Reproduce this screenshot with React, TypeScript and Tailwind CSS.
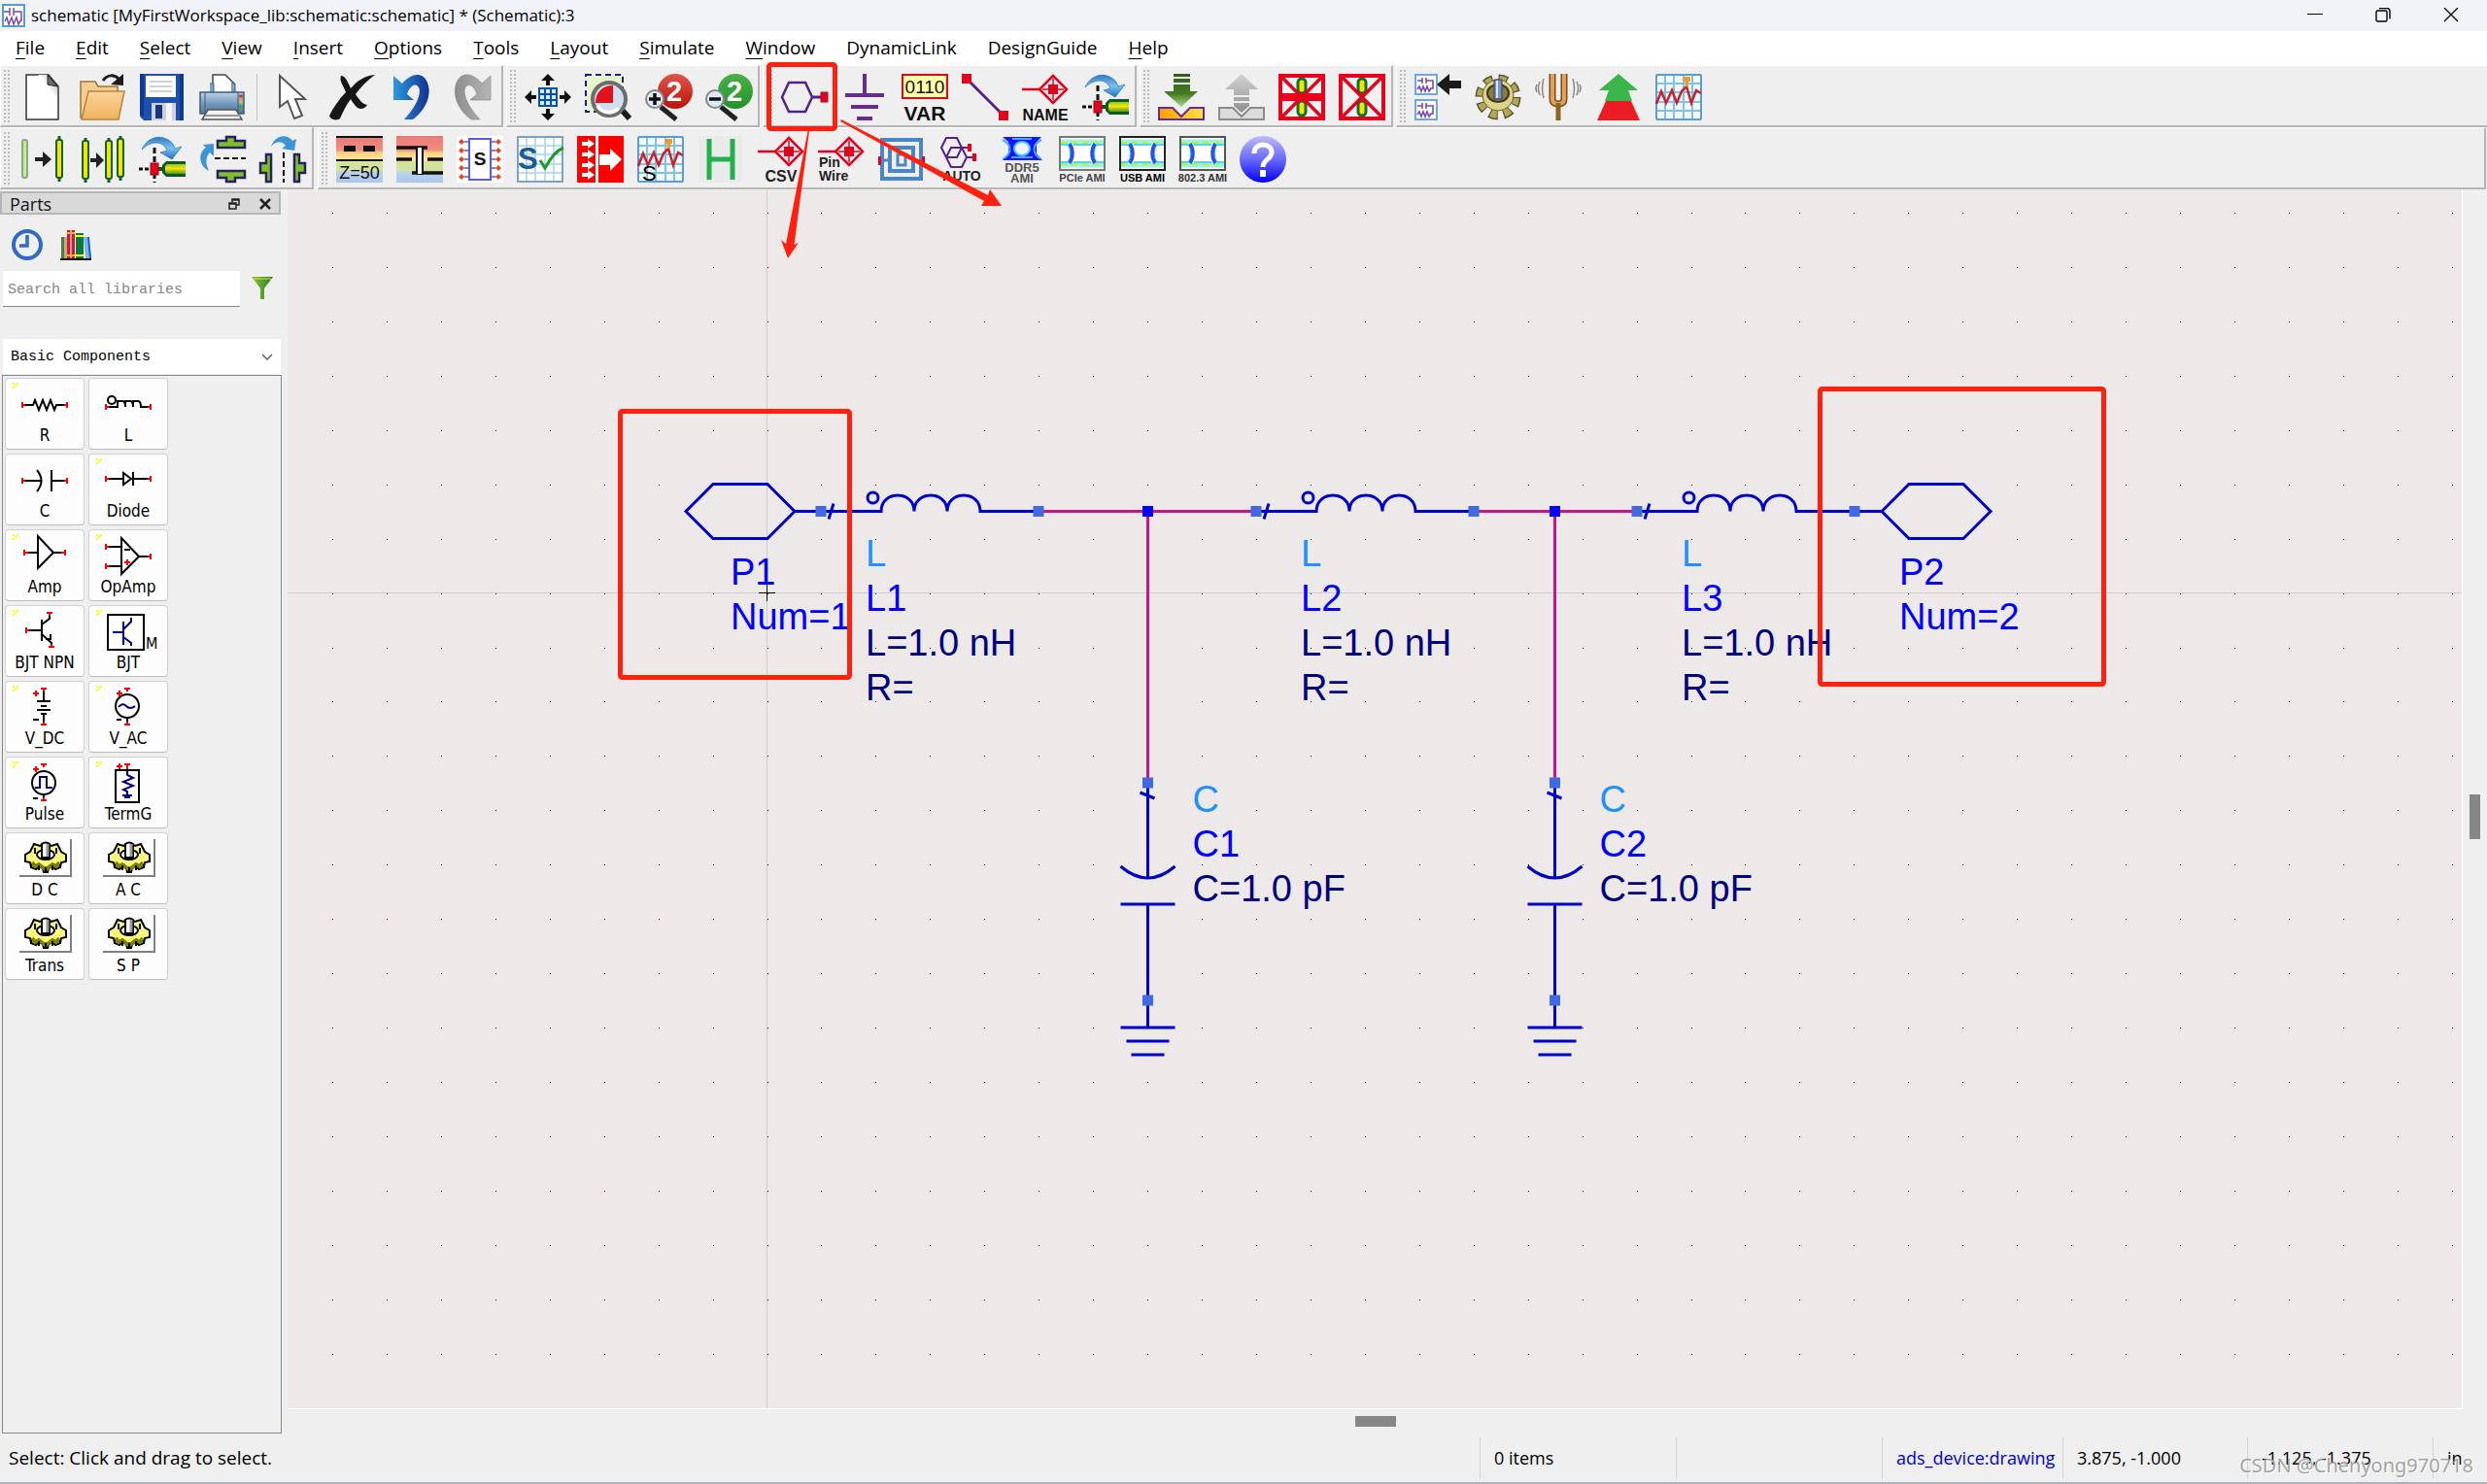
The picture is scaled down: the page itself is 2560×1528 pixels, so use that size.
import { useState, type ReactNode } from "react";
import clsx from "clsx";

const UI = "font-['Open_Sans','Segoe_UI',sans-serif]";

const MENUS = [
  ["F", "ile"],
  ["E", "dit"],
  ["S", "elect"],
  ["V", "iew"],
  ["I", "nsert"],
  ["O", "ptions"],
  ["T", "ools"],
  ["L", "ayout"],
  ["S", "imulate"],
  ["W", "indow"],
  ["", "DynamicLink"],
  ["", "DesignGuide"],
  ["H", "elp"],
];

type Tool = { name: string; icon: ReactNode } | "sep";

/* Shared gradients, referenced by id from every icon. */
function Gradients() {
  return (
    <svg width="0" height="0" className="absolute" aria-hidden="true">
      <defs>
        <linearGradient id="folder" x1="0" y1="0" x2="0" y2="1">
          <stop offset="0" stopColor="#fbd49a" />
          <stop offset="1" stopColor="#efb35e" />
        </linearGradient>
        <linearGradient id="page" x1="1" y1="0" x2="0.4" y2="0.5">
          <stop offset="0" stopColor="#b5b5b5" />
          <stop offset="1" stopColor="#ffffff" />
        </linearGradient>
        <linearGradient id="undo" x1="0" y1="0" x2="1" y2="0">
          <stop offset="0" stopColor="#2a9be0" />
          <stop offset="1" stopColor="#14308e" />
        </linearGradient>
        <linearGradient id="redo" x1="0" y1="0" x2="1" y2="0">
          <stop offset="0" stopColor="#8e8e8e" />
          <stop offset="1" stopColor="#b4b4b4" />
        </linearGradient>
        <linearGradient id="printer" x1="0" y1="0" x2="0" y2="1">
          <stop offset="0" stopColor="#bcd2e6" />
          <stop offset="0.6" stopColor="#6e93b8" />
          <stop offset="1" stopColor="#56799c" />
        </linearGradient>
        <linearGradient id="swoop" x1="0" y1="0" x2="0" y2="1">
          <stop offset="0" stopColor="#2f7fc4" />
          <stop offset="0.5" stopColor="#7cc0ee" />
          <stop offset="1" stopColor="#1f6fbd" />
        </linearGradient>
        <linearGradient id="pin" x1="0" y1="0" x2="0" y2="1">
          <stop offset="0" stopColor="#8fc92c" />
          <stop offset="0.45" stopColor="#f7e600" />
          <stop offset="1" stopColor="#4f9a25" />
        </linearGradient>
        <linearGradient id="redball" x1="0" y1="0" x2="0" y2="1">
          <stop offset="0" stopColor="#e0564a" />
          <stop offset="1" stopColor="#b8140c" />
        </linearGradient>
        <linearGradient id="greenball" x1="0" y1="0" x2="0" y2="1">
          <stop offset="0" stopColor="#4bb04a" />
          <stop offset="1" stopColor="#23922a" />
        </linearGradient>
        <linearGradient id="down" x1="0" y1="0" x2="0" y2="1">
          <stop offset="0" stopColor="#2f5c17" />
          <stop offset="0.6" stopColor="#447a26" />
          <stop offset="1" stopColor="#a9d880" />
        </linearGradient>
        <linearGradient id="tray" x1="0" y1="0" x2="1" y2="0">
          <stop offset="0" stopColor="#ff9d00" />
          <stop offset="1" stopColor="#ffe14a" />
        </linearGradient>
        <linearGradient id="grey" x1="0" y1="0" x2="0" y2="1">
          <stop offset="0" stopColor="#d4d4d4" />
          <stop offset="1" stopColor="#8f8f8f" />
        </linearGradient>
        <linearGradient id="stack" x1="0" y1="0" x2="0" y2="1">
          <stop offset="0" stopColor="#e87a76" />
          <stop offset="0.3" stopColor="#f08e80" />
          <stop offset="0.36" stopColor="#fdd27c" />
          <stop offset="0.5" stopColor="#fbe3a4" />
          <stop offset="0.58" stopColor="#d3e39a" />
          <stop offset="0.74" stopColor="#cfe3a2" />
          <stop offset="0.78" stopColor="#b9d2ee" />
          <stop offset="1" stopColor="#aac6ea" />
        </linearGradient>
        <linearGradient id="help" x1="0" y1="0" x2="0" y2="1">
          <stop offset="0" stopColor="#bcbcfb" />
          <stop offset="0.5" stopColor="#6a6af8" />
          <stop offset="1" stopColor="#0000ff" />
        </linearGradient>
        <linearGradient id="funnel" x1="0" y1="0" x2="1" y2="0">
          <stop offset="0" stopColor="#8bc63a" />
          <stop offset="1" stopColor="#2d7a1c" />
        </linearGradient>
        <pattern id="dither" width="4" height="4" patternUnits="userSpaceOnUse">
          <rect width="4" height="4" fill="#fff" />
          <rect width="2" height="2" fill="#ff0" />
          <rect x="2" y="2" width="2" height="2" fill="#ff0" />
        </pattern>
      </defs>
    </svg>
  );
}

function Ico({ children }: { children: ReactNode }) {
  return (
    <svg viewBox="0 0 48 48" className="size-12 overflow-visible" fill="none" aria-hidden="true">
      {children}
    </svg>
  );
}

function Swoop() {
  return (
    <path
      d="M3 14C8 2 20-1 28 3c5 2 8 6 9 10l7-2-10 13L22 17l7-2c-2-5-6-8-11-8-6 0-11 3-15 7Z"
      fill="url(#swoop)"
      stroke="#2a70b2"
      strokeWidth="0.7"
    />
  );
}

function RotatePin() {
  return (
    <Ico>
      <Swoop />
      <path d="M16 12v15M16 38v10" stroke="#111" strokeWidth="3" strokeDasharray="6 3" />
      <path d="M0 34h10" stroke="#111" strokeWidth="3" strokeDasharray="4 2" />
      <rect x="20" y="32" width="6" height="4" fill="#0f5a24" />
      <path d="M48 26H28l-4 4v8l4 4h20Z" fill="#0f5a24" />
      <path d="M48 29H29l-2 2v6l2 2h19Z" fill="url(#pin)" />
      <rect x="12" y="28" width="8" height="12" fill="#e8001c" stroke="#8c0f14" />
    </Ico>
  );
}

function NetDiamond() {
  return (
    <>
      <path d="M0 16h18" stroke="#e8001c" strokeWidth="2.5" />
      <path d="M32 2 46 16 32 30 18 16Z" fill="#efefef" stroke="#e8001c" strokeWidth="2.5" />
      <path d="M27 11h10v10H27Z" fill="#e8001c" />
      <path d="M32 5v22M21 16h22" stroke="#e8001c" strokeWidth="1.5" />
    </>
  );
}

function Magnifier({ sign }: { sign: "+" | "-" }) {
  return (
    <>
      <path d="m16 34 16 13" stroke="#222" strokeWidth="5" />
      <circle cx="10" cy="26" r="9" fill="#dcebf7" stroke="#888" strokeWidth="2" />
      <path d={sign === "+" ? "M4 26h12M10 20v12" : "M4 26h12"} stroke="#111" strokeWidth="3.5" />
    </>
  );
}

function Caption({ y = 47, size = 14, fill = "#111", children }: { y?: number; size?: number; fill?: string; children: string }) {
  return (
    <text x="24" y={y} textAnchor="middle" fontFamily="Liberation Sans, sans-serif" fontWeight="bold" fontSize={size} fill={fill}>
      {children}
    </text>
  );
}

function Eye({ label, edge, fill }: { label: string; edge: string; fill: string }) {
  return (
    <Ico>
      <rect x="1" y="1" width="46" height="34" fill="#fff" stroke={edge} strokeWidth="2" />
      <path d="M2 6h44M2 30h44" stroke="#9df2d8" strokeWidth="5" />
      <path d="M2 7h44M2 29h44" stroke="#b6f23c" strokeWidth="2" strokeDasharray="6 5" />
      <path d="M2 9h6c5 0 5 18 0 18H2M46 9h-6c-5 0-5 18 0 18h6M15 9h18M15 27h18" stroke="#22c8f0" strokeWidth="1.5" />
      <path d="M11 8c4 6 4 14 0 20M37 8c-4 6-4 14 0 20" stroke="#2a4cf0" strokeWidth="3.5" />
      <Caption y={47} size={11} fill={fill}>{label}</Caption>
    </Ico>
  );
}

function DeletePins({ wide }: { wide?: boolean }) {
  return (
    <Ico>
      <rect x="2" y="2" width="44" height="44" fill="#f1f1f1" stroke="#e8001c" strokeWidth="4" />
      <rect x="20" y="5" width="8" height="15" rx="4" fill="#f4e500" stroke="#12702c" strokeWidth="3" />
      <rect x="20" y="28" width="8" height="15" rx="4" fill="#f4e500" stroke="#12702c" strokeWidth="3" />
      <path d="M4 4l40 40M44 4 4 44" stroke="#e8001c" strokeWidth="3.5" />
      {wide && <path d="M3 24h42" stroke="#e8001c" strokeWidth="8" />}
    </Ico>
  );
}

function Plot({ s }: { s?: boolean }) {
  return (
    <Ico>
      <rect x="1" y="1" width="46" height="46" rx="1" fill="#f4f8fb" stroke="#5b9bd0" strokeWidth="2" />
      <path d="M10 2v44M19 2v44M29 2v44M38 2v44M2 10h44M2 19h44M2 29h44M2 38h44" stroke="#7cc3e6" strokeWidth="2" />
      <path d="M1 31l5-13 5 12 6-13 5 13 5-12 5-5 5 17 5-13 5 3" stroke="#c8202c" strokeWidth="2.5" />
      <path d="M29 3h7v5h-2v5h-3V8h-2Z" fill="#f39a1e" />
      {s && (
        <text x="5" y="46" fontFamily="Liberation Sans, sans-serif" fontSize="22" fill="#000">
          S
        </text>
      )}
    </Ico>
  );
}

function MiniSchematic({ x = 0, y = 0 }: { x?: number; y?: number }) {
  return (
    <g transform={`translate(${x} ${y})`}>
      <rect x="1" y="1" width="22" height="20" fill="#fff" stroke="#6fa8dc" strokeWidth="2" />
      <path d="M3 7h5M8 4v6M12 4v6M12 7h7v8h-3M3 16l2-3 2 5 2-5 2 5 2-5 2 5 2-3" stroke="#7a4aa8" strokeWidth="1.6" />
    </g>
  );
}

const MAIN_TOOLS: Tool[][] = [
  [
    {
      name: "New",
      icon: (
        <Ico>
          <path d="M8 1h23l10 12v34H8Z" fill="#fff" stroke="#333" strokeWidth="1.5" />
          <path d="M20 1h10l10 12v12Z" fill="url(#page)" />
          <path d="M30 1v10l10 2Z" fill="#6d6d6d" stroke="#222" />
        </Ico>
      ),
    },
    {
      name: "Open",
      icon: (
        <Ico>
          <path d="M2 46V8h15l3 5h20v9" fill="#f3cd92" stroke="#a27434" strokeWidth="1.5" />
          <path d="M10 18h37l-6 29H3Z" fill="url(#folder)" stroke="#b9833b" strokeWidth="1.5" />
          <path d="M25 7c5-7 12-6 16-2" stroke="#1b1b1b" strokeWidth="3" />
          <path d="M46 0v12l-13-1Z" fill="#1b1b1b" />
        </Ico>
      ),
    },
    {
      name: "Save",
      icon: (
        <Ico>
          <path d="M1 0h44l1 1v47H5l-4-4Z" fill="#1d4fb0" />
          <path d="M1 0h4v44l-4-2ZM42 0h4v48h-4Z" fill="#0d3a91" />
          <path d="M7 2h31v22H7Z" fill="#fafafa" />
          <path d="M11 8h23M11 13h23M11 18h23" stroke="#cfd3d9" strokeWidth="2" />
          <path d="M13 30h25v18H13Z" fill="#cdd2d9" />
          <path d="M17 32h7v14h-7Z" fill="#17357a" />
          <path d="M28 30h6v18h-6Z" fill="#f4f4f4" />
        </Ico>
      ),
    },
    {
      name: "Print",
      icon: (
        <Ico>
          <path d="M14 20V1h13l9 9v10Z" fill="#fff" stroke="#444" strokeWidth="1.5" />
          <path d="M11 10h4v12h-4M33 10h4v12h-4" fill="#7ba0c4" stroke="#41637f" />
          <path d="M1 19h45v22H1Z" fill="url(#printer)" stroke="#3b5c79" strokeWidth="1.5" />
          <path d="M6 19v22M40 19v22" stroke="#3b5c79" />
          <path d="M41 23h4" stroke="#e23636" strokeWidth="3" />
          <path d="M41 29h4" stroke="#f0b429" strokeWidth="3" />
          <path d="M41 34h4" stroke="#47a447" strokeWidth="3" />
          <path d="M9 37h29l6 10H3Z" fill="#f2f2f2" stroke="#555" strokeWidth="1.5" />
          <path d="M6 43h36" stroke="#999" strokeWidth="2" />
        </Ico>
      ),
    },
    "sep",
    {
      name: "Select",
      icon: (
        <Ico>
          <path d="M12 2v32l8-6 7 18 8-3-7-17h10Z" fill="#fff" stroke="#555" strokeWidth="2" />
        </Ico>
      ),
    },
    {
      name: "Delete",
      icon: (
        <Ico>
          <path
            d="M13 2c4 0 6 4 10 13C30 7 37 2 48 1 39 8 33 14 28 21c4 6 7 10 12 11-3 5-9 5-12 1-2-2-4-5-5-7-5 7-8 13-11 20-4 3-10 1-11-3C5 35 11 26 18 19 15 11 11 7 13 2Z"
            fill="#171717"
          />
        </Ico>
      ),
    },
    {
      name: "Undo",
      icon: (
        <Ico>
          <path d="M5 2v25l21 0-7-6c2-6 6-11 10-9 6 3 3 18-13 35h9C41 35 45 18 39 7 35-1 24-2 14 10Z" fill="url(#undo)" />
        </Ico>
      ),
    },
    {
      name: "Redo",
      icon: (
        <Ico>
          <path
            d="M43 2v25H22l7-6c-2-6-6-11-10-9-6 3-3 18 13 35h-9C7 35 3 18 9 7c4-8 15-9 25 3Z"
            fill="url(#redo)"
            stroke="#8a8a8a"
            strokeWidth="0.7"
          />
        </Ico>
      ),
    },
  ],
  [
    {
      name: "View All",
      icon: (
        <Ico>
          <rect x="14" y="14" width="20" height="20" fill="#0a4fa8" />
          <path
            d="M16 16h4v4h-4ZM22 16h4v4h-4ZM28 16h4v4h-4ZM16 22h4v4h-4ZM22 22h4v4h-4ZM28 22h4v4h-4ZM16 28h4v4h-4ZM22 28h4v4h-4ZM28 28h4v4h-4Z"
            fill="#d5ecfb"
          />
          <path d="M24 0l7 7h-5v5h-4V7h-5ZM24 48l7-7h-5v-5h-4v5h-5ZM0 24l7-7v5h5v4H7v5ZM48 24l-7-7v5h-5v4h5v5Z" fill="#111" />
        </Ico>
      ),
    },
    {
      name: "Zoom To Area",
      icon: (
        <Ico>
          <path d="M1 1h38v38H1Z" fill="#e8f4cc" stroke="#13208a" strokeWidth="2" strokeDasharray="6 4" />
          <path d="m37 36 9 10" stroke="#1b1b1b" strokeWidth="6" />
          <circle cx="25" cy="26" r="17" fill="#cfdff0" stroke="#6d6d6d" strokeWidth="4" />
          <path d="M29 12v18H11c0-11 7-18 18-18Z" fill="#e3111a" />
          <path d="M13 33c5 8 16 9 22 2" stroke="#fff" strokeWidth="4" />
        </Ico>
      ),
    },
    {
      name: "Zoom In By 2",
      icon: (
        <Ico>
          <circle cx="31" cy="18" r="18" fill="url(#redball)" />
          <Magnifier sign="+" />
          <text x="22" y="28" fontFamily="Liberation Sans, sans-serif" fontWeight="bold" fontSize="29" fill="#fff">
            2
          </text>
        </Ico>
      ),
    },
    {
      name: "Zoom Out By 2",
      icon: (
        <Ico>
          <circle cx="31" cy="18" r="18" fill="url(#greenball)" />
          <Magnifier sign="-" />
          <text x="22" y="28" fontFamily="Liberation Sans, sans-serif" fontWeight="bold" fontSize="29" fill="#fff">
            2
          </text>
        </Ico>
      ),
    },
  ],
  [
    {
      name: "Insert Pin",
      icon: (
        <Ico>
          <path d="M1 24 8 9h17l7 15-7 15H8Z" stroke="#52218a" strokeWidth="2.5" />
          <path d="M32 24h9" stroke="#52218a" strokeWidth="3" />
          <rect x="41" y="19" width="7" height="10" fill="#e8001c" stroke="#a5121c" />
        </Ico>
      ),
    },
    {
      name: "Insert Ground",
      icon: (
        <Ico>
          <path d="M24 0v21M4 22h40M10 34h28M16 46h16" stroke="#662d91" strokeWidth="4" />
        </Ico>
      ),
    },
    {
      name: "Insert Variable",
      icon: (
        <Ico>
          <rect x="1" y="1" width="46" height="24" fill="#ffffa8" stroke="#e2061c" strokeWidth="2" />
          <text x="24" y="20" textAnchor="middle" fontFamily="Liberation Sans, sans-serif" fontSize="19" fill="#111">
            0110
          </text>
          <Caption y={48} size={21}>VAR</Caption>
        </Ico>
      ),
    },
    {
      name: "Insert Wire",
      icon: (
        <Ico>
          <path d="M5 5l38 38" stroke="#52218a" strokeWidth="3" />
          <rect x="0" y="0" width="10" height="10" fill="#e2061c" />
          <rect x="38" y="38" width="10" height="10" fill="#e2061c" />
        </Ico>
      ),
    },
    {
      name: "Wire Name",
      icon: (
        <Ico>
          <NetDiamond />
          <Caption y={48} size={16}>NAME</Caption>
        </Ico>
      ),
    },
    { name: "Rotate Pin", icon: <RotatePin /> },
  ],
  [
    {
      name: "Push Into Hierarchy",
      icon: (
        <Ico>
          <path d="M1 35h14l9 9 9-9h14v12H1Z" fill="url(#tray)" stroke="#662d91" strokeWidth="2" />
          <path d="M16 0h17v3H16ZM16 5h17v4H16ZM16 11h17v7h8L24 34 6 18h10Z" fill="url(#down)" />
        </Ico>
      ),
    },
    {
      name: "Pop Out",
      icon: (
        <Ico>
          <path d="M1 35h14l9 9 9-9h14v12H1Z" fill="#dcdcdc" stroke="#8c8c8c" strokeWidth="2" />
          <path d="M24 0 41 16h-9v6H16v-6H7ZM16 24h16v4H16ZM16 30h16v3l-8 7-8-7Z" fill="url(#grey)" />
        </Ico>
      ),
    },
    { name: "Deactivate", icon: <DeletePins wide /> },
    { name: "Deactivate And Short", icon: <DeletePins /> },
  ],
  [
    {
      name: "Simulation Schematic",
      icon: (
        <Ico>
          <MiniSchematic />
          <MiniSchematic y={26} />
          <path d="M23 11 36 0v7h12v8H36v7Z" fill="#1b1b1b" />
        </Ico>
      ),
    },
    {
      name: "Simulate",
      icon: (
        <Ico>
          <circle cx="24" cy="24" r="17" stroke="#57531f" strokeWidth="13" strokeDasharray="8 5.35" />
          <circle cx="24" cy="24" r="17" stroke="#b3a75c" strokeWidth="10" strokeDasharray="6 7.35" strokeDashoffset="-1" />
          <circle cx="24" cy="22" r="16" fill="#ddd28a" stroke="#6b6428" />
          <ellipse cx="24" cy="20" rx="11" ry="9" fill="#8b7d3f" stroke="#3c3820" strokeWidth="2" />
          <path d="M20 6h8v20h-8Z" fill="#7b93c4" stroke="#2c3a60" />
          <path d="M22 7h2v18h-2Z" fill="#dde7f7" />
        </Ico>
      ),
    },
    {
      name: "Tune",
      icon: (
        <Ico>
          <path d="M18 0v26q0 5 6 5t6-5V0" stroke="#7a4a1d" strokeWidth="7" />
          <path d="M18 0v26q0 5 6 5t6-5V0" stroke="#dfa35c" strokeWidth="4" />
          <path d="M24 30v18" stroke="#8a6520" strokeWidth="5" />
          <path d="M9 5q-3 10 0 20M5 8q-3 7 0 14M2 11q-2 4 0 8M39 5q3 10 0 20M43 8q3 7 0 14M46 11q2 4 0 8" stroke="#8a8a8a" strokeWidth="1.5" />
        </Ico>
      ),
    },
    {
      name: "Optimize",
      icon: (
        <Ico>
          <path d="M24 0 44 17H34l4 11H10l4-11H4Z" fill="#39b54a" />
          <path d="M11 28h26l9 20H2Z" fill="#ed1c24" />
        </Ico>
      ),
    },
    { name: "Data Display", icon: <Plot /> },
  ],
];

const AUX_TOOLS: Tool[][] = [
  [
    {
      name: "Move Component",
      icon: (
        <Ico>
          <rect x="4" y="4" width="5" height="39" rx="2" fill="#d8e38c" stroke="#79b08c" strokeWidth="2" />
          <path d="M17 22h8v-6l9 8-9 8v-6h-8Z" fill="#222" />
          <path d="M42 0v47" stroke="#12612b" strokeWidth="3" />
          <rect x="39" y="4" width="6" height="39" rx="2" fill="#f4e500" stroke="#12612b" strokeWidth="2" />
        </Ico>
      ),
    },
    {
      name: "Copy Component",
      icon: (
        <Ico>
          <path d="M7 2v46M31 2v46M43 0v46" stroke="#12612b" strokeWidth="3" />
          <rect x="4" y="5" width="6" height="39" rx="2" fill="#f4e500" stroke="#12612b" strokeWidth="2" />
          <path d="M12 23h6v-6l8 8-8 8v-6h-6Z" fill="#222" />
          <rect x="28" y="5" width="6" height="39" rx="2" fill="#f4e500" stroke="#12612b" strokeWidth="2" />
          <rect x="40" y="3" width="6" height="39" rx="2" fill="#f4e500" stroke="#12612b" strokeWidth="2" />
        </Ico>
      ),
    },
    { name: "Rotate", icon: <RotatePin /> },
    {
      name: "Mirror About X",
      icon: (
        <Ico>
          <path d="M10 36C-1 30-1 17 7 12L4 9l11-1v13l-4-4c-4 4-5 11-1 19Z" fill="#3b94d6" />
          <path d="M19 12v-7h9V1h9v4h10v7ZM19 36v7h9v4h9v-4h10v-7Z" fill="#7fc02a" stroke="#262262" strokeWidth="2.5" />
          <path d="M16 23h32" stroke="#111" strokeWidth="2" strokeDasharray="6 3" />
        </Ico>
      ),
    },
    {
      name: "Mirror About Y",
      icon: (
        <Ico>
          <path d="M12 11C17-2 29-2 34 5l4-2-2 12-13-2 4-3c-4-5-10-5-15 1Z" fill="#3b94d6" />
          <path d="M12 19H7v9H1v10h6v9h5ZM36 19h5v9h6v10h-6v9h-5Z" fill="#7fc02a" stroke="#262262" strokeWidth="2.5" />
          <path d="M25 17v31" stroke="#111" strokeWidth="2" strokeDasharray="6 3" />
        </Ico>
      ),
    },
  ],
  [
    {
      name: "Controlled Impedance",
      icon: (
        <Ico>
          <rect width="48" height="48" fill="url(#stack)" />
          <path d="M0 1h48M0 25h48" stroke="#111" strokeWidth="2" />
          <path d="M8 10h12v6H8ZM28 10h12v6H28Z" fill="#111" />
          <text x="24" y="44" textAnchor="middle" fontFamily="Liberation Sans, sans-serif" fontSize="18" fill="#111">
            Z=50
          </text>
        </Ico>
      ),
    },
    {
      name: "Via Designer",
      icon: (
        <Ico>
          <rect width="48" height="48" fill="url(#stack)" />
          <path d="M0 12h32M0 24h16M32 24h16M16 38h32" stroke="#111" strokeWidth="3.5" />
          <path d="M24 11v29" stroke="#111" strokeWidth="8" />
          <path d="M24 12v27" stroke="#fff" strokeWidth="4" />
        </Ico>
      ),
    },
    {
      name: "S-parameter Block",
      icon: (
        <Ico>
          <rect width="48" height="48" fill="#fff" />
          <path d="M5 6h38M5 15h38M5 24h38M5 33h38M5 42h38" stroke="#5a5ae8" strokeWidth="1.5" />
          <path
            d="M5 3l3 3-3 3-3-3ZM5 12l3 3-3 3-3-3ZM5 21l3 3-3 3-3-3ZM5 30l3 3-3 3-3-3ZM5 39l3 3-3 3-3-3ZM43 3l3 3-3 3-3-3ZM43 12l3 3-3 3-3-3ZM43 21l3 3-3 3-3-3ZM43 30l3 3-3 3-3-3ZM43 39l3 3-3 3-3-3Z"
            fill="#f0401c"
            stroke="#f7a08c"
            strokeWidth="0.7"
          />
          <rect x="13" y="3" width="22" height="42" fill="#fff" stroke="#5a5ae8" strokeWidth="2" />
          <Caption y={30} size={19}>S</Caption>
        </Ico>
      ),
    },
    {
      name: "S-parameter Checker",
      icon: (
        <Ico>
          <rect x="1" y="1" width="46" height="46" fill="#fff" stroke="#7ba3c9" strokeWidth="2" />
          <path d="M10 2v44M19 2v44M29 2v44M38 2v44M2 10h44M2 19h44M2 29h44M2 38h44" stroke="#a5d3ea" strokeWidth="1.5" />
          <text x="1" y="34" fontFamily="Liberation Sans, sans-serif" fontWeight="bold" fontSize="31" fill="#1c5b96">
            S
          </text>
          <path d="M24 25l5 8C35 22 41 15 48 12" stroke="#1d9a28" strokeWidth="3" />
        </Ico>
      ),
    },
    {
      name: "Channel Simulation",
      icon: (
        <Ico>
          <rect width="48" height="48" fill="#f00" />
          <path d="M19 0h3v48h-3Z" fill="#fff" />
          <path d="M23 19h11v-6l12 11-12 12v-6H23Z" fill="#fff" />
          <path d="M5 6h6V3l7 5-7 5v-3H5ZM5 17h6v-3l7 5-7 5v-3H5ZM5 28h6v-3l7 5-7 5v-3H5ZM5 38h6v-3l7 5-7 5v-3H5Z" fill="#fff" />
        </Ico>
      ),
    },
    { name: "S-parameter Plot", icon: <Plot s /> },
    {
      name: "Hspice",
      icon: (
        <Ico>
          <rect x="2" width="44" height="48" fill="#eaeaea" />
          <path d="M12 3v42M36 3v42M12 24h24" stroke="#22b14c" strokeWidth="5" />
        </Ico>
      ),
    },
    {
      name: "CSV",
      icon: (
        <Ico>
          <NetDiamond />
          <Caption y={47} size={16} fill="#222">CSV</Caption>
        </Ico>
      ),
    },
    {
      name: "Pin Wire",
      icon: (
        <Ico>
          <NetDiamond />
          <g fontFamily="Liberation Sans, sans-serif" fontWeight="bold" fontSize="14" fill="#222">
            <text x="1" y="32">Pin</text>
            <text x="1" y="46">Wire</text>
          </g>
        </Ico>
      ),
    },
    {
      name: "Spiral Inductor",
      icon: (
        <Ico>
          <rect x="4" y="4" width="40" height="40" fill="#efefef" stroke="#4a86c5" strokeWidth="4" />
          <rect x="12" y="12" width="24" height="24" stroke="#4a86c5" strokeWidth="4" />
          <path d="M20 30V19h8v11Z" stroke="#4a86c5" strokeWidth="3" />
          <path d="M3 25h9" stroke="#4a86c5" strokeWidth="3" />
          <rect x="0" y="21" width="3" height="9" fill="#e8001c" />
          <rect x="45" y="21" width="3" height="9" fill="#e8001c" />
        </Ico>
      ),
    },
    {
      name: "Auto Pin",
      icon: (
        <Ico>
          <path d="M3 12 8 2h11l5 10-5 10H8ZM8 22l5-10h11l5 10-5 10H13Z" stroke="#52218a" strokeWidth="2" />
          <path d="M24 12h6M29 22h6" stroke="#52218a" strokeWidth="2" />
          <rect x="30" y="8" width="4" height="8" fill="#e8001c" />
          <rect x="35" y="18" width="4" height="8" fill="#e8001c" />
          <Caption y={46} size={14} fill="#222">AUTO</Caption>
        </Ico>
      ),
    },
    {
      name: "DDR5 AMI",
      icon: (
        <Ico>
          <path d="M4 1h40l-5 5v12l6 7H4l6-7V6Z" fill="#1414ff" />
          <path d="M4 4c10 5 10 14 0 20M44 4c-10 5-10 14 0 20M14 3h20M13 22h22" stroke="#41a7ff" strokeWidth="2" />
          <ellipse cx="24" cy="13" rx="8" ry="7" fill="#eef3ff" stroke="#46c8ff" strokeWidth="2" />
          <Caption y={37} size={13} fill="#555">DDR5</Caption>
          <Caption y={48} size={13} fill="#555">AMI</Caption>
        </Ico>
      ),
    },
    { name: "PCIe AMI", icon: <Eye label="PCIe AMI" edge="#777" fill="#444" /> },
    { name: "USB AMI", icon: <Eye label="USB AMI" edge="#222" fill="#000" /> },
    { name: "802.3 AMI", icon: <Eye label="802.3 AMI" edge="#555" fill="#333" /> },
    {
      name: "Help",
      icon: (
        <Ico>
          <circle cx="24" cy="24" r="24" fill="url(#help)" />
          <path d="M15 18c0-6 4-9 9-9s9 3 9 8c0 7-9 7-9 15" stroke="#fff" strokeWidth="5" />
          <rect x="21" y="35" width="6" height="7" fill="#fff" />
        </Ico>
      ),
    },
  ],
];

function ToolGroup({ tools, last, open }: { tools: Tool[]; last?: boolean; open?: boolean }) {
  return (
    <div
      className={clsx(
        "flex h-16 items-start border-t border-l border-b-2 border-t-white border-l-white border-b-[#b6b6b6] pt-2 pl-[3px] pr-1.5",
        last && "flex-1",
        !open && "border-r-2 border-r-[#b6b6b6]",
      )}
    >
      <div className="-mt-1 mr-[9px] flex h-[54px] w-1.5 justify-between">
        <i className="border-l-2 border-dotted border-[#bcbcbc]" />
        <i className="border-l-2 border-dotted border-[#bcbcbc]" />
      </div>
      <div className="flex gap-3.5">
        {tools.map((t, i) =>
          t === "sep" ? (
            <div key={i} className="-mx-[3px] w-px bg-[#c4c4c4]" />
          ) : (
            <button key={t.name} type="button" aria-label={t.name} className="size-12 shrink-0">
              {t.icon}
            </button>
          ),
        )}
      </div>
    </div>
  );
}

/* ---- Parts palette ---- */

function Flag() {
  return <path d="M8 5h2v2h2v2h-2v2H8V9h2V7H8ZM12 5h2v2h-2Z" fill="#ff0" />;
}

function Ends({ d }: { d: string }) {
  return <path d={d} stroke="#f00" strokeWidth="2" />;
}

function Gear() {
  return (
    <>
      <path d="M68 7v39M15 45h53" stroke="#808080" strokeWidth="2" />
      <path
        d="M30 12l6 2 4-2h4l4 2 6-2 4 8 5 3v7l-5 1-1 5-5 2-3-3-4 2-1 4h-4l-1-4-4-2-3 3-5-2-1-5-5-1v-7l5-3Z"
        fill="url(#dither)"
        stroke="#000"
        strokeWidth="2"
      />
      <path d="M28 31l3 4 4-2 5 4h4l5-4 4 2 3-4" stroke="#808000" strokeWidth="4" />
      <path d="M27 33v4M35 34v5M42 36v6M49 34v5M57 33v4M31 16v6M53 16v6" stroke="#000" strokeWidth="2" />
      <ellipse cx="42" cy="23" rx="9" ry="5" fill="#fff" stroke="#000" strokeWidth="2" />
      <path d="M38 12q4-3 8 0v14h-8Z" fill="#fff" stroke="#000" strokeWidth="2" />
      <path d="M44 12v13" stroke="#999" strokeWidth="3" />
    </>
  );
}

const SOURCE_PINS = <Ends d="M37 8h6M37 45h6M40 8v3M40 42v3M29 13h6M32 10v6" />;

const PARTS: { name: string; flag?: boolean; art: ReactNode }[] = [
  {
    name: "R",
    flag: true,
    art: (
      <>
        <path d="M20 28h9l2-5 4 10 4-10 4 10 4-10 4 10 2-5h9" />
        <Ends d="M18 25v6M64 25v6M18 28h3M61 28h3" />
      </>
    ),
  },
  {
    name: "L",
    art: (
      <>
        <path d="M20 30h10v-6h5q3 0 3 6v-6h5q3 0 3 6v-6h5q3 0 3 6h8" />
        <circle cx="24" cy="23" r="4" />
        <Ends d="M18 27v6M64 27v6M18 30h3M61 30h3" />
      </>
    ),
  },
  {
    name: "C",
    art: (
      <>
        <path d="M20 28h18M33 17q9 11 0 22M48 17v22M48 28h13" />
        <Ends d="M18 25v6M64 25v6M18 28h3M61 28h3" />
      </>
    ),
  },
  {
    name: "Diode",
    flag: true,
    art: (
      <>
        <path d="M20 26h15M36 20v12l8-6ZM46 19v14M46 26h15" />
        <Ends d="M18 23v6M64 23v6M18 26h3M61 26h3" />
      </>
    ),
  },
  {
    name: "Amp",
    flag: true,
    art: (
      <>
        <path d="M22 24h12M34 7v33l16-16ZM50 24h9" />
        <Ends d="M20 21v6M62 21v6M20 24h4M58 24h4" />
      </>
    ),
  },
  {
    name: "OpAmp",
    flag: true,
    art: (
      <>
        <path d="M20 18h14M20 38h14M34 9v37l18-18ZM52 28h9M37 21h6" />
        <Ends d="M18 15v6M18 35v6M64 25v6M18 18h3M18 38h3M61 28h3M37 34h6M40 31v6" />
      </>
    ),
  },
  {
    name: "BJT NPN",
    flag: true,
    art: (
      <>
        <path d="M24 26h14M38 15v22M38 20l8-6v-4M38 30l10 9v3M42 35h5v-5" />
        <Ends d="M22 23v6M22 26h3M43 8h6M46 8v3M45 43h6M48 40v3" />
      </>
    ),
  },
  {
    name: "BJT",
    flag: true,
    art: (
      <>
        <path d="M20 10h37v36H20Z" />
        <path d="M25 28h11M36 17v24M36 25l8-8v-4M36 33l8 6v3" stroke="#000080" />
        <text x="59" y="45" fontFamily="DejaVu Sans Condensed, sans-serif" fontSize="16" fill="#000" stroke="none">
          M
        </text>
      </>
    ),
  },
  {
    name: "V_DC",
    flag: true,
    art: (
      <>
        <path d="M40 10v11M33 21h14M37 26h6M33 30h14M37 34h6M40 34v9M29 40h6" />
        {SOURCE_PINS}
      </>
    ),
  },
  {
    name: "V_AC",
    flag: true,
    art: (
      <>
        <circle cx="40" cy="26" r="12" />
        <path d="M40 38v5M29 40h5" />
        <path d="M31 27q4-5 8-1t9 0" stroke="#000080" />
        {SOURCE_PINS}
      </>
    ),
  },
  {
    name: "Pulse",
    flag: true,
    art: (
      <>
        <circle cx="40" cy="27" r="12" />
        <path d="M40 39v5M29 43h5" />
        <path d="M31 32h5V21h7v11h6" stroke="#000080" />
        {SOURCE_PINS}
      </>
    ),
  },
  {
    name: "TermG",
    flag: true,
    art: (
      <>
        <path d="M28 14h24v33H28Z" />
        <path d="M40 15v4l6 3-10 4 10 4-10 4 4 2v7M35 40h10M37 42h6" stroke="#000080" />
        <Ends d="M37 8h6M40 8v5M29 10h6M32 7v6" />
      </>
    ),
  },
  { name: "D C", art: <Gear /> },
  { name: "A C", art: <Gear /> },
  { name: "Trans", art: <Gear /> },
  { name: "S P", art: <Gear /> },
];

function PartsPanel() {
  const [query, setQuery] = useState("");

  return (
    <aside className="flex w-[296px] shrink-0 flex-col pt-0.5 pb-1">
      <div className="mr-[7px] flex h-6 items-center border-2 border-[#b6b6b6] bg-[#d9d9d9] pt-0.5 pr-2 pl-2 text-[18px] text-[#111]">
        <span className="flex-1 leading-5">Parts</span>
        <button type="button" aria-label="Float panel" className="mr-5">
          <svg viewBox="0 0 12 12" className="size-3" fill="none" stroke="#222" strokeWidth="1.5">
            <path d="M4 4V1h7v6H8M1 5h7v6H1ZM1 6h7M4 2h7" />
          </svg>
        </button>
        <button type="button" aria-label="Close panel">
          <svg viewBox="0 0 12 12" className="size-3" fill="none" stroke="#222" strokeWidth="2.5">
            <path d="M1 1l10 10M11 1 1 11" />
          </svg>
        </button>
      </div>

      <div className="mt-[15px] flex gap-[18px] pl-3">
        <button type="button" aria-label="Recent parts">
          <svg viewBox="0 0 32 32" className="size-8" fill="none" stroke="#2f6bc4">
            <circle cx="16" cy="16" r="14" strokeWidth="4" />
            <path d="M16 6v11H8" strokeWidth="3.5" />
          </svg>
        </button>
        <button type="button" aria-label="Libraries">
          <svg viewBox="0 0 32 32" className="size-8">
            <path d="M1 8h3v22H1Z" fill="#4f7a4a" />
            <path d="M4 8h3v22H4Z" fill="#c4ad72" />
            <path d="M7 1h8v29H7Z" fill="#c2203a" />
            <path d="M10 1h2v29h-2Z" fill="#e88b96" />
            <path d="M7 3h8v2H7ZM7 26h8v2H7Z" fill="#f5b02a" />
            <path d="M16 4h8v26h-8Z" fill="#0b7a3b" />
            <path d="M16 6h8v2h-8ZM16 26h8v2h-8Z" fill="#ff0" />
            <path d="M24 8h5l3 22h-6Z" fill="#7fb4ea" />
            <path d="M28 8h2l2 22h-2Z" fill="#1c62b5" />
            <path d="M0 30h32v2H0Z" fill="#111" />
          </svg>
        </button>
      </div>

      <div className="mt-[11px] flex items-start gap-3 pl-[3px]">
        <input
          type="text"
          aria-label="Search all libraries"
          placeholder="Search all libraries"
          value={query}
          onChange={(e) => setQuery(e.target.value)}
          className="h-[37px] w-[244px] rounded-none border-b border-[#868686] bg-white px-[5px] pt-0.5 font-['Liberation_Mono',monospace] text-[15px] text-black outline-none placeholder:text-[#868686]"
        />
        <button type="button" aria-label="Filter" className="mt-[5px]">
          <svg viewBox="0 0 22 24" className="h-6 w-[22px]">
            <path d="M0 1h22L13 13v11H9V13Z" fill="url(#funnel)" />
            <path d="M2 3h18" stroke="#e6e04a" />
          </svg>
        </button>
      </div>

      <div className="relative mt-[33px] mr-[7px] ml-[3px]">
        <select
          aria-label="Palette"
          className="block h-9 w-full appearance-none bg-white px-2 pt-0.5 font-['Liberation_Mono',monospace] text-[15px] text-black outline-none"
        >
          <option>Basic Components</option>
        </select>
        <svg viewBox="0 0 12 8" className="pointer-events-none absolute top-[15px] right-2 h-2 w-3" fill="none" stroke="#555" strokeWidth="1.3">
          <path d="M1 1l5 5 5-5" />
        </svg>
      </div>

      <div className="mt-px mr-1.5 ml-0.5 flex-1 border border-[#828790] p-0.5">
        <div className="flex w-[168px] flex-wrap gap-1">
          {PARTS.map((p) => (
            <button
              key={p.name}
              type="button"
              className="flex h-[74px] w-[82px] flex-col items-center rounded border border-[#d0d0d0] border-b-[#bcbcbc] bg-[#fdfdfd]"
            >
              <svg viewBox="1 1 80 48" className="h-12 w-20" fill="none" stroke="#000" strokeWidth="2" aria-hidden="true">
                {p.flag && <g stroke="none"><Flag /></g>}
                {p.art}
              </svg>
              <span className="font-['DejaVu_Sans_Condensed','DejaVu_Sans',sans-serif] text-[17px] leading-5 text-black">{p.name}</span>
            </button>
          ))}
        </div>
      </div>
    </aside>
  );
}

/* ---- Schematic sheet ---- */

const PITCH = 55.94;

const DOTS = Array.from({ length: 40 }, (_, c) =>
  Array.from({ length: 22 }, (_, r) => `M${Math.round(46 + c * PITCH)} ${Math.round(23 + r * PITCH)}h1v1h-1Z`).join(""),
).join("");

function Terminal({ x, y, node }: { x: number; y: number; node?: boolean }) {
  return <rect x={x - 5.5} y={y - 5.5} width="11" height="11" fill={node ? "#0000ff" : "#4169e1"} />;
}

function Labels({ x, y, lines }: { x: number; y: number; lines: [string, string][] }) {
  return (
    <g fontFamily="Liberation Sans, Arial, sans-serif" fontSize="38">
      {lines.map(([text, fill], i) => (
        <text key={i} x={x} y={y + i * 46} fill={fill}>
          {text}
        </text>
      ))}
    </g>
  );
}

const KIND = "#1e90ff";
const NAME = "#0000ff";
const PARAM = "#000080";

function Inductor({ x, name }: { x: number; name: string }) {
  return (
    <g transform={`translate(${x} 330)`}>
      <g fill="none" stroke="#0000cd" strokeWidth="3">
        <path d="M0 .5h62c0-22 34-22 34 0c0-22 34-22 34 0c0-22 34-22 34 0h60M8 8.5l5-16" />
        <circle cx="53.5" cy="-13.5" r="5.5" />
      </g>
      <Terminal x={0} y={0.5} />
      <Terminal x={224} y={0.5} />
      <Labels x={46} y={57} lines={[["L", KIND], [name, NAME], ["L=1.0 nH", PARAM], ["R=", PARAM]]} />
    </g>
  );
}

function Capacitor({ x, name }: { x: number; name: string }) {
  return (
    <g transform={`translate(${x} 610)`}>
      <path
        d="M0 0v97M-28 86q28 24 56 0M-28 125h56M0 125v126M-28 252h56M-22 266h44M-17 280h34M-8 10l15 6"
        fill="none"
        stroke="#0000cd"
        strokeWidth="3"
      />
      <Terminal x={0} y={0} />
      <Terminal x={0} y={224} />
      <Labels x={46} y={30} lines={[["C", KIND], [name, NAME], ["C=1.0 pF", PARAM]]} />
    </g>
  );
}

function Port({ x, labelX, name, num }: { x: number; labelX: number; name: string; num: string }) {
  return (
    <g>
      <path d={`M${x} 330.5l28-28h56l28 28l-28 28h-56Z`} fill="none" stroke="#0000cd" strokeWidth="3" />
      <Labels x={labelX} y={406} lines={[[name, NAME], [num, NAME]]} />
    </g>
  );
}

function Sheet() {
  return (
    <svg className="absolute inset-0 size-full">
      <path d={DOTS} fill="#111" />
      <path d="M493.5 0V2000M0 414.5H4000" stroke="#cfcdcc" />
      <path d="M493.5 406v17M485 414.5h17" stroke="#000" />
      <path d="M773 330.5h224M1221 330.5h168M885.5 330v280M1304.5 330v280" stroke="#c71585" strokeWidth="3" />
      <path d="M521 330.5h28M1612 330.5h28" stroke="#0000cd" strokeWidth="3" />
      <Port x={410} labelX={456} name="P1" num="Num=1" />
      <Port x={1641} labelX={1659} name="P2" num="Num=2" />
      <Inductor x={549} name="L1" />
      <Inductor x={997} name="L2" />
      <Inductor x={1389} name="L3" />
      <Capacitor x={885.5} name="C1" />
      <Capacitor x={1304.5} name="C2" />
      <Terminal x={885.5} y={330.5} node />
      <Terminal x={1304.5} y={330.5} node />
    </svg>
  );
}

/* Red call-outs drawn over the window. */
function Callouts() {
  return (
    <svg className="pointer-events-none absolute inset-0 size-full" aria-hidden="true">
      <g fill="none" stroke="#ff2010" strokeWidth="5">
        <rect x="791.5" y="66.5" width="68" height="66" rx="2" />
        <rect x="638.5" y="423.5" width="236" height="274" rx="2" />
        <rect x="1873.5" y="400.5" width="292" height="304" rx="2" />
      </g>
      <path d="M831.5 135l1.5 0L817.5 252l4.500-2L811 266l-7-19 5 4Z" fill="#ff2010" />
      <path d="M866 123l151 78 2-6 12 17h-21l3-5L865 125Z" fill="#ff2010" />
    </svg>
  );
}

function StatusCell({ className, children }: { className: string; children?: ReactNode }) {
  return (
    <div className={clsx("flex h-[43px] shrink-0 items-center border-l border-[#d4d4d4] pl-3.5 text-[18px] whitespace-nowrap", className)}>
      {children}
    </div>
  );
}

export default function App() {
  return (
    <div className={clsx("relative flex h-screen flex-col overflow-hidden bg-[#efefef] text-[19px] text-black", UI)}>
      <Gradients />

      <header className="flex h-8 shrink-0 items-center bg-[#f1f3f9] pr-0.5 pl-0.5">
        <svg viewBox="0 0 24 24" className="mr-1.5 size-6" fill="none">
          <rect x="1" y="1" width="22" height="22" fill="#fff" stroke="#4f9fd8" strokeWidth="2" />
          <path d="M2 8h6M8 4v8M12 4v8M12 8h8v10M3 18l2-4 2 7 3-7 2 7 3-7 2 7 3-5" stroke="#7a4aa8" strokeWidth="1.5" />
        </svg>
        <h1 className="flex-1 text-[17px]">schematic [MyFirstWorkspace_lib:schematic:schematic] * (Schematic):3</h1>
        <button type="button" aria-label="Minimize" className="flex w-[70px] justify-center">
          <svg viewBox="0 0 16 16" className="size-4" stroke="#000">
            <path d="M0 6.5h16" />
          </svg>
        </button>
        <button type="button" aria-label="Restore" className="flex w-[70px] justify-center">
          <svg viewBox="0 0 16 16" className="size-4" fill="none" stroke="#000" strokeWidth="1.4">
            <rect x="1" y="3" width="11" height="11" rx="1.5" />
            <path d="M4 0.500h8q3 0 3 3v8" />
          </svg>
        </button>
        <button type="button" aria-label="Close" className="flex w-[70px] justify-center">
          <svg viewBox="0 0 16 16" className="size-4" stroke="#000" strokeWidth="1.3">
            <path d="M1 0l14 14M15 0 1 14" />
          </svg>
        </button>
      </header>

      <nav className="flex h-[35px] shrink-0 items-center gap-8 bg-white pl-4">
        {MENUS.map(([key, rest]) => (
          <button key={key + rest} type="button">
            {key && <span className="underline underline-offset-4">{key}</span>}
            {rest}
          </button>
        ))}
      </nav>

      <div className="flex shrink-0 gap-[3px]">
        {MAIN_TOOLS.map((tools, i) => (
          <ToolGroup key={i} tools={tools} last={i === 4} open={i === 4} />
        ))}
      </div>
      <div className="flex shrink-0 gap-1 pr-px">
        {AUX_TOOLS.map((tools, i) => (
          <ToolGroup key={i} tools={tools} last={i === 1} />
        ))}
      </div>

      <div className="flex min-h-0 flex-1">
        <PartsPanel />
        <main className="flex min-w-0 flex-1 flex-col pt-px">
          <div className="relative flex-1 overflow-hidden border-r border-b border-white bg-[#ede9e8]">
            <Sheet />
          </div>
          <div className="flex h-[29px] justify-center pt-[7px]">
            <div className="h-[11px] w-[42px] bg-[#868686]" />
          </div>
        </main>
        <div className="flex w-[25px] items-center justify-center pt-1.5">
          <div className="h-[46px] w-[11px] bg-[#868686]" />
        </div>
      </div>

      <footer className="flex h-12 shrink-0 items-start border-b-2 border-[#b0b0b8]">
        <div className="flex h-[43px] flex-1 items-center pl-[9px]">Select: Click and drag to select.</div>
        <StatusCell className="w-[202px]">0 items</StatusCell>
        <StatusCell className="w-[212px]" />
        <StatusCell className="w-[186px] text-[#0000cd]">ads_device:drawing</StatusCell>
        <StatusCell className="w-[190px]">3.875, -1.000</StatusCell>
        <StatusCell className="w-[191px]">-1.125, -1.375</StatusCell>
        <StatusCell className="w-14">in</StatusCell>
      </footer>

      <Callouts />
      <div className="pointer-events-none absolute right-3.5 bottom-1 text-[20px] text-[#8c8c8c]/80 [text-shadow:1px_1px_0_#fff] font-['Noto_Sans',sans-serif]">
        CSDN @Chenyong970718
      </div>
    </div>
  );
}
